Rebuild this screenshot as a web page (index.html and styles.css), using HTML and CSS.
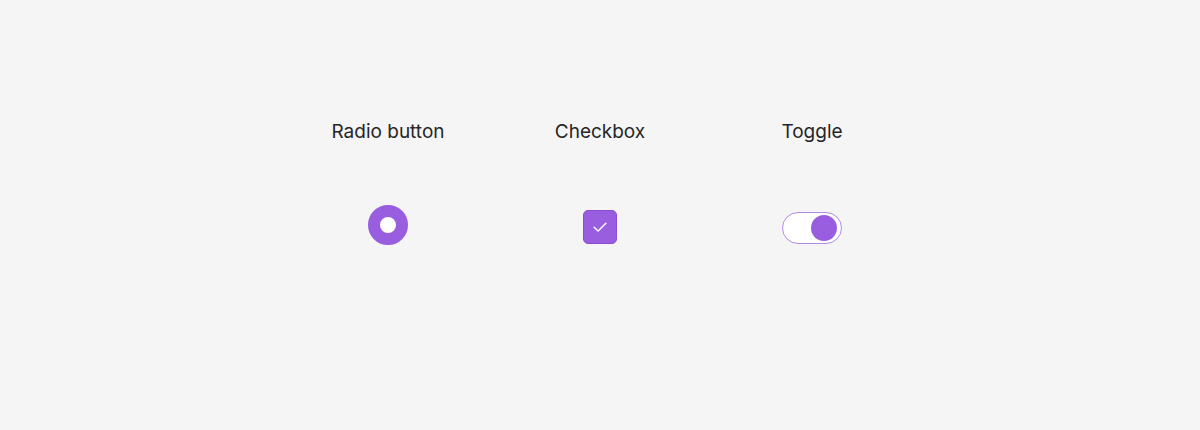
FILE: index.html
```html
<!DOCTYPE html>
<html lang="en">
<head>
<meta charset="utf-8">
<title>Controls</title>
<link rel="stylesheet" href="styles.css">
</head>
<body>
<main class="row">
  <section class="col">
    <div class="label">Radio button</div>
    <div class="control">
      <span class="radio"></span>
    </div>
  </section>
  <section class="col">
    <div class="label">Checkbox</div>
    <div class="control">
      <span class="checkbox">
        <svg width="18" height="18" viewBox="0 0 16 16" fill="none">
          <path d="M2.8 8.3 L6.3 11.6 L13.2 4.6" stroke="#ffffff" stroke-width="1.3" stroke-linecap="round" stroke-linejoin="round"/>
        </svg>
      </span>
    </div>
  </section>
  <section class="col">
    <div class="label">Toggle</div>
    <div class="control">
      <span class="toggle"><span class="knob"></span></span>
    </div>
  </section>
</main>
</body>
</html>
```

FILE: styles.css
```css
html, body {
  margin: 0;
  padding: 0;
  background: #f5f5f5;
  height: 100%;
}
body {
  font-family: Inter, "Noto Sans", sans-serif;
  color: #262626;
}
.row {
  display: flex;
  justify-content: center;
  padding-top: 120px;
}
.col {
  width: 212px;
  display: flex;
  flex-direction: column;
  align-items: center;
}
.label {
  font-size: 19px;
  line-height: 24px;
  font-weight: 400;
  letter-spacing: 0;
}
.control {
  margin-top: 62px;
  height: 40px;
  display: flex;
  align-items: center;
  justify-content: center;
}
.radio {
  box-sizing: border-box;
  width: 40px;
  height: 40px;
  border-radius: 50%;
  border: 12px solid #995ee0;
  background: #ffffff;
  margin-top: -2px;
}
.checkbox {
  box-sizing: border-box;
  width: 34px;
  height: 34px;
  border-radius: 5px;
  background: #995ee0;
  border: 1px solid #8a4fd3;
  display: flex;
  align-items: center;
  justify-content: center;
  margin-top: 2px;
}
.toggle {
  box-sizing: border-box;
  width: 60px;
  height: 32px;
  border-radius: 16px;
  border: 1px solid #b48ae8;
  background: #ffffff;
  display: flex;
  align-items: center;
  justify-content: flex-end;
  padding-right: 4px;
  margin-top: 4px;
}
.knob {
  width: 26px;
  height: 26px;
  border-radius: 50%;
  background: #995ee0;
}
```
